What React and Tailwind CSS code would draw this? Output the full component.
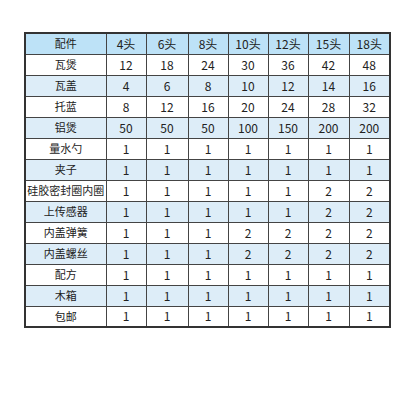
import React from "react";

const headers = ["配件", "4头", "6头", "8头", "10头", "12头", "15头", "18头"];
const rows = [
  ["瓦煲", 12, 18, 24, 30, 36, 42, 48],
  ["瓦盖", 4, 6, 8, 10, 12, 14, 16],
  ["托蓝", 8, 12, 16, 20, 24, 28, 32],
  ["铝煲", 50, 50, 50, 100, 150, 200, 200],
  ["量水勺", 1, 1, 1, 1, 1, 1, 1],
  ["夹子", 1, 1, 1, 1, 1, 1, 1],
  ["硅胶密封圈内圈", 1, 1, 1, 1, 1, 2, 2],
  ["上传感器", 1, 1, 1, 1, 1, 2, 2],
  ["内盖弹簧", 1, 1, 1, 2, 2, 2, 2],
  ["内盖螺丝", 1, 1, 1, 2, 2, 2, 2],
  ["配方", 1, 1, 1, 1, 1, 1, 1],
  ["木箱", 1, 1, 1, 1, 1, 1, 1],
  ["包邮", 1, 1, 1, 1, 1, 1, 1],
];
const widths = ["w-[81px]", "w-[40px]", "w-[42px]", "w-[40px]", "w-[40px]", "w-[40px]", "w-[41px]", "w-[41px]"];

export default function App() {
  return (
    <div className="w-[400px] h-[400px] bg-white pt-[32px] pl-[24px] font-['Noto_Sans_CJK_SC','Noto_Sans',sans-serif] text-[12px] text-[#222]">
      <table className="table-fixed border-collapse border-2 border-[#333] w-[366px]">
        <colgroup>
          {widths.map((w, i) => (
            <col key={i} className={w} />
          ))}
        </colgroup>
        <thead>
          <tr className="bg-[#bde2f7] h-[21px]">
            {headers.map((h, i) => (
              <th
                key={i}
                className={
                  i === 0
                    ? "border border-[#444] font-normal text-center p-0 leading-none text-[11px]"
                    : "border border-[#444] font-normal text-center p-0 leading-none"
                }
              >
                {h}
              </th>
            ))}
          </tr>
        </thead>
        <tbody>
          {rows.map((r, ri) => (
            <tr key={ri} className={ri % 2 === 1 ? "bg-[#ddedf8] h-[21px]" : "bg-white h-[21px]"}>
              {r.map((c, ci) => (
                <td
                  key={ci}
                  className={
                    ci === 0
                      ? "border border-[#444] text-center p-0 leading-none whitespace-nowrap text-[11px]"
                      : "border border-[#444] text-center p-0 leading-none"
                  }
                >
                  {c}
                </td>
              ))}
            </tr>
          ))}
        </tbody>
      </table>
    </div>
  );
}
